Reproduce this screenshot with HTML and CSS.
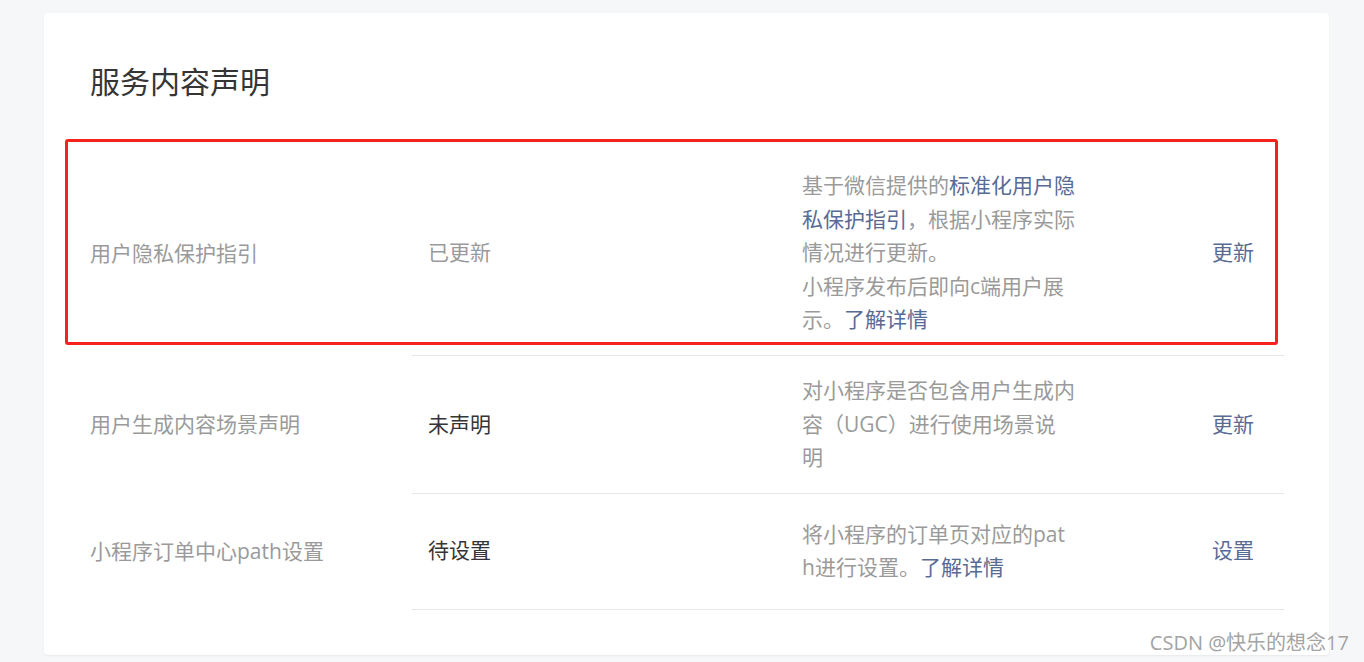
FILE: index.html
```html
<html>
  <head>
    <meta charset="utf-8" />
    <title>服务内容声明</title>
    <link rel="stylesheet" href="styles.css">
  </head>

  <body>
    <div class="card">
        <h2 class="card-title">服务内容声明</h2>

        <div class="item">
            <div class="item-label">用户隐私保护指引</div>
            <div class="item-body">
                <div class="item-status muted">已更新</div>
                <div class="item-desc">基于微信提供的<a class="link">标准化用户隐私保护指引</a>，根据小程序实际情况进行更新。<br>小程序发布后即向c端用户展示。<a class="link">了解详情</a></div>
                <a class="item-action link">更新</a>
            </div>
        </div>
        <div class="item">
            <div class="item-label">用户生成内容场景声明</div>
            <div class="item-body">
                <div class="item-status">未声明</div>
                <div class="item-desc">对小程序是否包含用户生成内容（UGC）进行使用场景说明</div>
                <a class="item-action link">更新</a>
            </div>
        </div>
        <div class="item">
            <div class="item-label">小程序订单中心path设置</div>
            <div class="item-body short">
                <div class="item-status">待设置</div>
                <div class="item-desc">将小程序的订单页对应的path进行设置。<a class="link">了解详情</a></div>
                <a class="item-action link">设置</a>
            </div>
        </div>

        <!-- 标注框 -->
        <div class="mark"></div>
    </div>

    <div class="watermark">CSDN @快乐的想念17</div>
  </body>
</html>
```

FILE: styles.css
```css
body {
    margin: 0;
    background-color: #f6f7f9;
    font-family: "Open Sans", "Noto Sans CJK SC", sans-serif;
    font-size: 21px;
    line-height: 1.6;
    color: #353535;
}
.card {
    position: relative;
    margin: 13px 35px 0 44px;
    padding: 48px 45px 45px 46px;
    background-color: #fff;
    border-radius: 4px;
    box-shadow: 0 1px 2px rgba(0, 0, 0, 0.06);
}
.card-title {
    margin: 0 0 48px;
    font-size: 30px;
    font-weight: normal;
    line-height: 42px;
    color: #353535;
}
.item {
    display: flex;
}
.item-label {
    width: 322px;
    flex: none;
    display: flex;
    align-items: center;
    color: #9a9a9a;
}
.item-body {
    flex: 1;
    display: flex;
    align-items: center;
    padding: 18px 30px 18px 16px;
    border-bottom: 1px solid #e7e7e7;
}
.item-body.short {
    box-sizing: border-box;
    min-height: 116px;
}
.item-status {
    width: 374px;
    flex: none;
}
.muted {
    color: #9a9a9a;
}
.item-desc {
    width: 273.6px;
    flex: none;
    color: #9a9a9a;
    word-break: break-all;
}
.item-action {
    margin-left: auto;
}
.link {
    color: #576b95;
    text-decoration: none;
    cursor: pointer;
}
.mark {
    position: absolute;
    left: 21px;
    top: 126px;
    width: 1213px;
    height: 206px;
    box-sizing: border-box;
    border: 3px solid #f5231c;
    border-radius: 3px;
}
.watermark {
    position: absolute;
    right: 15px;
    bottom: 7px;
    font-size: 20px;
    line-height: 24px;
    color: #a3a3a3;
    text-shadow: 0 0 2px #fff;
}
```
